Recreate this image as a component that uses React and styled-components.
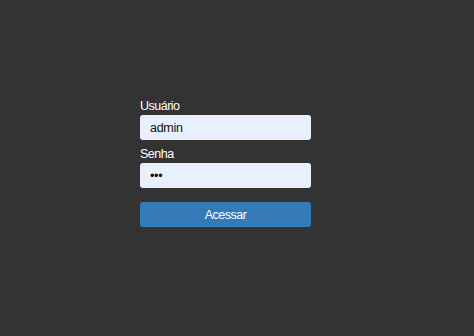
import React from "react";
import styled, { createGlobalStyle } from "styled-components";

const GlobalStyle = createGlobalStyle`
  html, body {
    margin: 0;
    padding: 0;
    background: #333333;
    font-family: "Liberation Sans", Arial, sans-serif;
  }
  * { box-sizing: border-box; }
`;

const Page = styled.div`
  width: 474px;
  height: 336px;
  display: flex;
  justify-content: flex-start;
  align-items: flex-start;
  padding: 98px 0 0 140px;
  background: #333333;
`;

const Form = styled.form`
  width: 171px;
  display: flex;
  flex-direction: column;
`;

const Label = styled.label`
  color: #ffffff;
  font-size: 12.5px;
  letter-spacing: -0.5px;
  line-height: 16px;
  margin-bottom: 1px;
  margin-top: ${(p) => (p.$first ? "0" : "6px")};
`;

const Input = styled.input`
  height: 25px;
  border: none;
  border-radius: 3px;
  background: #e8f0fe;
  color: #111;
  font-family: "Liberation Sans", Arial, sans-serif;
  font-size: 12.5px;
  letter-spacing: -0.3px;
  padding: 0 10px;
  outline: none;
`;

const Button = styled.button`
  margin-top: 14px;
  height: 25px;
  border: none;
  border-radius: 3px;
  background: #337ab7;
  color: #ffffff;
  font-family: "Liberation Sans", Arial, sans-serif;
  font-size: 12.5px;
  letter-spacing: -0.5px;
  cursor: pointer;
`;

export default function App() {
  return (
    <>
      <GlobalStyle />
      <Page>
        <Form onSubmit={(e) => e.preventDefault()}>
          <Label $first>Usuário</Label>
          <Input type="text" defaultValue="admin" />
          <Label>Senha</Label>
          <Input type="password" defaultValue="123" />
          <Button type="submit">Acessar</Button>
        </Form>
      </Page>
    </>
  );
}
